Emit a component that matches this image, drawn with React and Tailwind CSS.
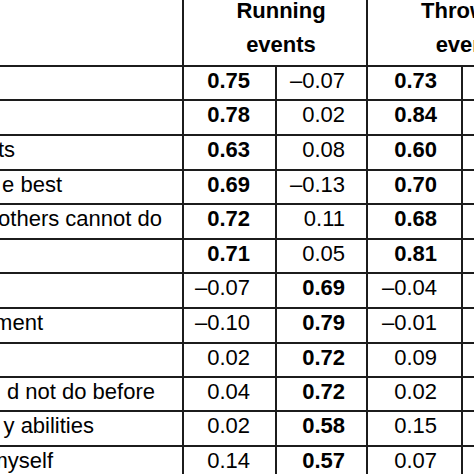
import React from "react";

const rows = [
  { h: "h-[34px]", label: "", w: "w-0", a: ["0.75", true], b: ["–0.07", false], c: ["0.73", true] },
  { h: "h-[35px]", label: "", w: "w-0", a: ["0.78", true], b: ["0.02", false], c: ["0.84", true] },
  { h: "h-[35px]", label: "ents", w: "w-[15px]", a: ["0.63", true], b: ["0.08", false], c: ["0.60", true] },
  { h: "h-[34px]", label: "e best", w: "w-[62px]", a: ["0.69", true], b: ["–0.13", false], c: ["0.70", true] },
  { h: "h-[35px]", label: "others cannot do", w: "w-[162px]", a: ["0.72", true], b: ["0.11", false], c: ["0.68", true] },
  { h: "h-[34px]", label: "", w: "w-0", a: ["0.71", true], b: ["0.05", false], c: ["0.81", true] },
  { h: "h-[35px]", label: "", w: "w-0", a: ["–0.07", false], b: ["0.69", true], c: ["–0.04", false] },
  { h: "h-[35px]", label: "ement", w: "w-[43px]", a: ["–0.10", false], b: ["0.79", true], c: ["–0.01", false] },
  { h: "h-[34px]", label: "", w: "w-0", a: ["0.02", false], b: ["0.72", true], c: ["0.09", false] },
  { h: "h-[34px]", label: "d not do before", w: "w-[155px]", a: ["0.04", false], b: ["0.72", true], c: ["0.02", false] },
  { h: "h-[35px]", label: "y abilities", w: "w-[94px]", a: ["0.02", false], b: ["0.58", true], c: ["0.15", false] },
  { h: "h-[35px]", label: "myself", w: "w-[53px]", a: ["0.14", false], b: ["0.57", true], c: ["0.07", false] },
];

const Num = ({ value, pad, h }) => (
  <div className={`${h} border-t-2 border-l-2 border-[#1c1c1c] flex justify-end items-start leading-[27px] ${pad}`}>
    <span className={value[1] ? "font-bold" : ""}>{value[0]}</span>
  </div>
);

export default function App() {
  return (
    <div className="w-[474px] h-[474px] overflow-hidden bg-white text-black text-[22px] font-['Liberation_Sans',Arial,sans-serif]">
      <div className="grid w-max grid-cols-[182px_93px_91px_95px_100px]">
        {/* header */}
        <div className="h-[65px]"></div>
        <div className="col-span-2 h-[65px] border-l-2 border-[#1c1c1c] flex items-end justify-center pl-[12px] pb-[3px]">
          <div className="font-bold leading-[34px] text-center">
            Running
            <br />
            events
          </div>
        </div>
        <div className="col-span-2 h-[65px] border-l-2 border-[#1c1c1c] flex items-end justify-center pl-[12px] pb-[3px]">
          <div className="font-bold leading-[34px] text-center whitespace-nowrap">
            Throwing
            <br />
            events
          </div>
        </div>

        {/* body */}
        {rows.map((r, i) => (
          <React.Fragment key={i}>
            <div className={`${r.h} border-t-2 border-[#1c1c1c] overflow-hidden leading-[27px]`}>
              <div className={`${r.w} flex justify-end whitespace-nowrap`}>
                <span>{r.label}</span>
              </div>
            </div>
            <Num value={r.a} pad="pr-[25px]" h={r.h} />
            <Num value={r.b} pad="pr-[21px]" h={r.h} />
            <Num value={r.c} pad="pr-[24px]" h={r.h} />
            <div className={`${r.h} border-t-2 border-l-2 border-[#1c1c1c]`}></div>
          </React.Fragment>
        ))}
      </div>
    </div>
  );
}
